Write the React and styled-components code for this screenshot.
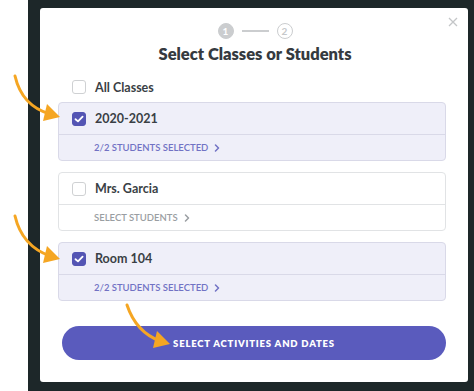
import styled, { createGlobalStyle } from "styled-components";

const GlobalStyle = createGlobalStyle`
  html, body {
    margin: 0;
    padding: 0;
    background: #ffffff;
    font-family: Lato, "Open Sans", sans-serif;
  }
`;

const classes = [
  { name: "2020-2021", checked: true, sub: "2/2 Students Selected" },
  { name: "Mrs. Garcia", checked: false, sub: "Select Students" },
  { name: "Room 104", checked: true, sub: "2/2 Students Selected" },
];

const Check = () => (
  <svg width="10" height="8" viewBox="0 0 10 8">
    <path d="M1.5 4.2 L4 6.4 L8.6 1.6" fill="none" stroke="#fff" strokeWidth="1.8" strokeLinecap="round" strokeLinejoin="round" />
  </svg>
);

const Chevron = () => (
  <svg width="6" height="8" viewBox="0 0 6 8">
    <path d="M1.5 1 L4.5 4 L1.5 7" fill="none" stroke="currentColor" strokeWidth="1.5" strokeLinecap="round" strokeLinejoin="round" />
  </svg>
);

const App = () => {
  return (
    <Page>
      <GlobalStyle />
      <Gutter />
      <Frame>
        <Modal>
          <Close>
            <svg width="10" height="10" viewBox="0 0 10 10">
              <path d="M1 1 L9 9 M9 1 L1 9" stroke="#c4c6c8" strokeWidth="1.3" />
            </svg>
          </Close>
          <Stepper>
            <Step $active>1</Step>
            <StepLine />
            <Step>2</Step>
          </Stepper>
          <Title>Select Classes or Students</Title>
          <AllRow>
            <Box />
            <RowLabel>All Classes</RowLabel>
          </AllRow>
          <List>
            {classes.map((c) => (
              <Card key={c.name} $checked={c.checked}>
                <CardTop $checked={c.checked}>
                  <Box $checked={c.checked}>{c.checked && <Check />}</Box>
                  <RowLabel>{c.name}</RowLabel>
                </CardTop>
                <CardSub $checked={c.checked}>
                  {c.sub}
                  <Chevron />
                </CardSub>
              </Card>
            ))}
          </List>
          <Submit>Select Activities and Dates</Submit>
        </Modal>
      </Frame>
      <Arrows width="474" height="391" viewBox="0 0 474 391">
        <g fill="none" stroke="#f5a623" strokeLinecap="round">
          <path d="M15 76 Q22 106 50 114" strokeWidth="3" />
          <path d="M15 216 Q22 246 50 256" strokeWidth="3" />
          <path d="M127 305 Q136 332 160 341" strokeWidth="3" />
        </g>
        <g fill="#f5a623">
          <polygon points="47,104 60,117 43,121" />
          <polygon points="47,246 60,259 43,263" />
          <polygon points="157,331 170,344 153,348" />
        </g>
      </Arrows>
    </Page>
  );
};

const Page = styled.div`
  position: relative;
  display: flex;
  width: 474px;
  height: 391px;
  overflow: hidden;
`;

const Gutter = styled.div`
  width: 28px;
  flex: none;
  background: #ffffff;
`;

const Frame = styled.div`
  flex: 1;
  background: #1d2729;
  padding: 8px 6px 9px 12px;
  display: flex;
`;

const Modal = styled.div`
  position: relative;
  flex: 1;
  background: #ffffff;
  border-radius: 3px;
  padding: 15px 22px 0 18px;
  display: flex;
  flex-direction: column;
`;

const Close = styled.div`
  position: absolute;
  top: 9px;
  right: 10px;
  line-height: 0;
`;

const Stepper = styled.div`
  display: flex;
  align-items: center;
  justify-content: center;
  gap: 8px;
  margin-left: 6px;
`;

const Step = styled.div`
  width: 16px;
  height: 16px;
  box-sizing: border-box;
  border-radius: 50%;
  display: flex;
  align-items: center;
  justify-content: center;
  font-size: 10px;
  font-weight: 700;
  color: ${(p) => (p.$active ? "#ffffff" : "#c6c8ca")};
  background: ${(p) => (p.$active ? "#cbcdcf" : "#ffffff")};
  border: 1.5px solid #cbcdcf;
`;

const StepLine = styled.div`
  width: 27px;
  height: 1.5px;
  background: #cbcdcf;
`;

const Title = styled.h1`
  margin: 4px 0 0 6px;
  text-align: center;
  font-size: 16.5px;
  line-height: 22px;
  font-weight: 800;
  color: #353a40;
`;

const AllRow = styled.div`
  display: flex;
  align-items: center;
  gap: 9px;
  height: 20px;
  margin: 12px 0 5px 14px;
`;

const Box = styled.div`
  width: 14px;
  height: 14px;
  flex: none;
  box-sizing: border-box;
  border-radius: 3px;
  display: flex;
  align-items: center;
  justify-content: center;
  background: ${(p) => (p.$checked ? "#5455b4" : "#ffffff")};
  border: 1px solid ${(p) => (p.$checked ? "#5455b4" : "#cfd1d3")};
`;

const RowLabel = styled.span`
  font-size: 12.5px;
  font-weight: 700;
  color: #3a3f45;
`;

const List = styled.div`
  display: flex;
  flex-direction: column;
  gap: 11px;
`;

const Card = styled.div`
  border-radius: 4px;
  border: 1px solid ${(p) => (p.$checked ? "#d9d9e8" : "#e1e3e5")};
  background: ${(p) => (p.$checked ? "#efeff9" : "#ffffff")};
`;

const CardTop = styled.div`
  display: flex;
  align-items: center;
  gap: 9px;
  height: 31px;
  padding-left: 13px;
  border-bottom: 1px solid ${(p) => (p.$checked ? "#d9d9e8" : "#e1e3e5")};
`;

const CardSub = styled.div`
  display: flex;
  align-items: center;
  gap: 6px;
  height: 25px;
  padding-left: 35px;
  font-size: 9.5px;
  font-weight: 600;
  text-transform: uppercase;
  letter-spacing: 0;
  color: ${(p) => (p.$checked ? "#7172c4" : "#9a9ea2")};
`;

const Submit = styled.button`
  margin: 25px 0 0 4px;
  height: 34px;
  border: none;
  border-radius: 17px;
  background: #5a5bbd;
  color: #ffffff;
  font-family: Lato, "Open Sans", sans-serif;
  font-size: 9.5px;
  font-weight: 800;
  letter-spacing: 0.8px;
  text-transform: uppercase;
  padding: 0;
`;

const Arrows = styled.svg`
  position: absolute;
  left: 0;
  top: 0;
  pointer-events: none;
`;

export default App;
